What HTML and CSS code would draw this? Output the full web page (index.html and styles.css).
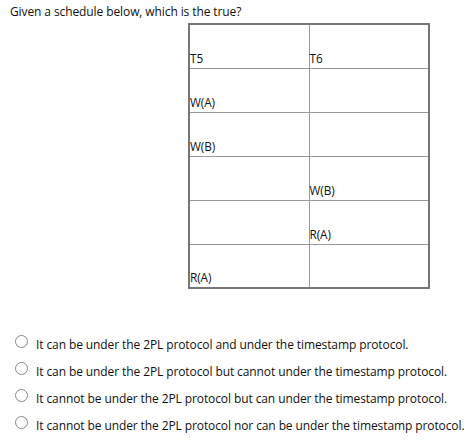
FILE: index.html
```html
<!DOCTYPE html>
<html>
<head>
<meta charset="utf-8">
<link rel="stylesheet" href="styles.css">
</head>
<body>
<div class="question">
  <p class="prompt">Given a schedule below, which is the true?</p>
  <table class="schedule">
    <tr><td>T5</td><td>T6</td></tr>
    <tr><td>W(A)</td><td></td></tr>
    <tr><td>W(B)</td><td></td></tr>
    <tr><td></td><td>W(B)</td></tr>
    <tr><td></td><td>R(A)</td></tr>
    <tr><td>R(A)</td><td></td></tr>
  </table>
  <ul class="options">
    <li><span class="radio"></span><span>It can be under the 2PL protocol and under the timestamp protocol.</span></li>
    <li><span class="radio"></span><span>It can be under the 2PL protocol but cannot under the timestamp protocol.</span></li>
    <li><span class="radio"></span><span>It cannot be under the 2PL protocol but can under the timestamp protocol.</span></li>
    <li><span class="radio"></span><span>It cannot be under the 2PL protocol nor can be under the timestamp protocol.</span></li>
  </ul>
</div>
</body>
</html>
```

FILE: styles.css
```css
html, body {
  margin: 0;
  padding: 0;
  background: #fff;
}
body {
  font-family: "Open Sans", "Liberation Sans", sans-serif;
  color: #111;
}
.question {
  padding: 3px 0 0 10px;
}
.prompt {
  margin: 0;
  font-size: 12px;
  letter-spacing: -0.1px;
  line-height: 18px;
}
.schedule {
  border-collapse: collapse;
  margin: 2px 0 0 178px;
  border: 2px solid #777;
}
.schedule td {
  width: 120px;
  height: 44px;
  padding: 0 0 2px 0;
  border: 1px solid #999;
  vertical-align: bottom;
  font-size: 11.8px;
  letter-spacing: -0.1px;
  line-height: 15px;
  box-sizing: border-box;
}
.options {
  list-style: none;
  margin: 42px 0 0 0;
  padding: 0;
}
.options li {
  display: flex;
  align-items: center;
  gap: 8px;
  height: 27px;
  font-size: 12px;
  letter-spacing: -0.1px;
  padding-left: 5px;
  white-space: nowrap;
}
.radio {
  width: 11px;
  height: 11px;
  border: 1px solid #888;
  border-radius: 50%;
  margin-top: -6px;
  flex: none;
}
```
